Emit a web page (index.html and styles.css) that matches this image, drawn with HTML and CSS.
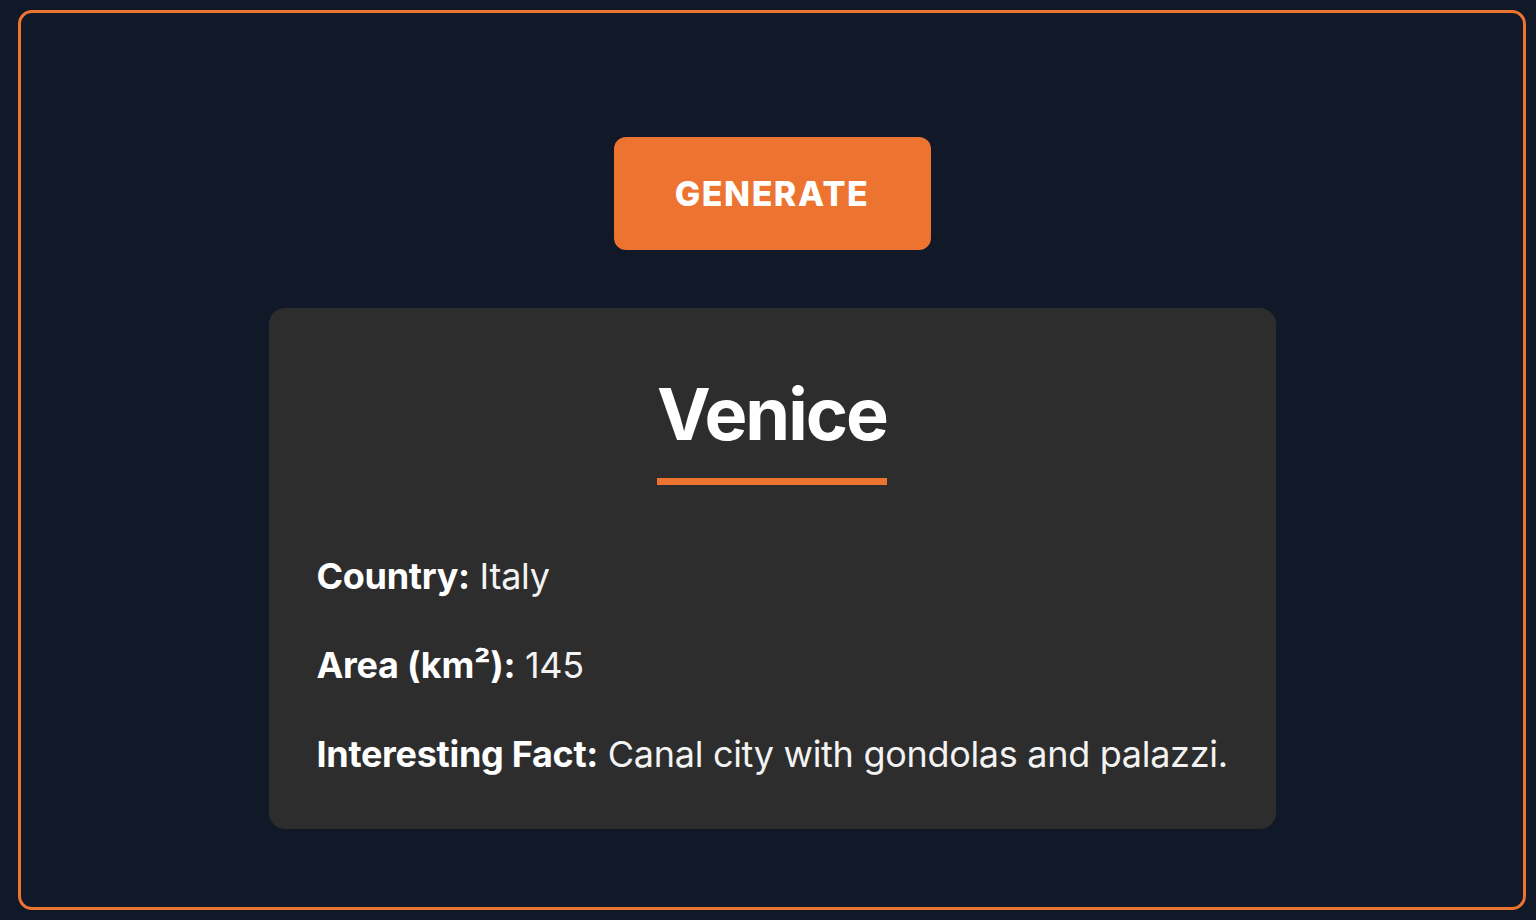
FILE: index.html
```html
<!DOCTYPE html>
<html lang="en">
<head>
    <meta charset="UTF-8">
    <meta name="viewport" content="width=device-width, initial-scale=1.0">
    <title>City Generator</title>
    <link rel="stylesheet" href="styles.css">
</head>
<body>
    <div class="frame">
        <button class="generate-btn" id="generate-btn">GENERATE</button>

        <div class="city-card">
            <div class="city-title">
                <h2 id="city-name">Venice</h2>
            </div>
            <p><strong>Country:</strong> <span id="city-country">Italy</span></p>
            <p><strong>Area (km²):</strong> <span id="city-area">145</span></p>
            <p><strong>Interesting Fact:</strong> <span id="city-fact">Canal city with gondolas and palazzi.</span></p>
        </div>
    </div>
</body>
</html>
```

FILE: styles.css
```css
html, body {
    height: 100%;
}
body {
    margin: 0;
    background-color: #111827;
    font-family: Inter, 'Noto Sans', sans-serif;
    color: #ffffff;
}
.frame {
    box-sizing: border-box;
    height: 900px;
    margin: 10px 10px 10px 18px;
    border: 3px solid #ed7331;
    border-radius: 14px;
    padding-top: 124px;
    display: flex;
    flex-direction: column;
    align-items: center;
}
.generate-btn {
    box-sizing: border-box;
    width: 317px;
    height: 113px;
    padding: 0;
    border: none;
    border-radius: 12px;
    background: #ed7331;
    color: #ffffff;
    font-family: Inter, sans-serif;
    font-size: 34px;
    font-weight: 800;
    letter-spacing: 1.5px;
    cursor: pointer;
}
.city-card {
    box-sizing: border-box;
    width: 1007px;
    margin-top: 58px;
    padding: 48px 40px 48px 48px;
    background: #2d2d2d;
    border-radius: 16px;
}
.city-title {
    text-align: center;
    margin-top: 14px;
    margin-bottom: 64px;
    padding-right: 8px;
}
.city-title h2 {
    display: inline-block;
    margin: 0;
    font-size: 72px;
    font-weight: 700;
    letter-spacing: -2px;
    line-height: normal;
    padding-bottom: 21px;
    border-bottom: 7px solid #ed7331;
}
.city-card p {
    margin: 0 0 35px 0;
    font-size: 36px;
    line-height: 54px;
    letter-spacing: -0.3px;
    white-space: nowrap;
    color: #f3f3f3;
}
.city-card p:last-child {
    margin-bottom: 0;
}
.city-card strong {
    color: #ffffff;
}
```
